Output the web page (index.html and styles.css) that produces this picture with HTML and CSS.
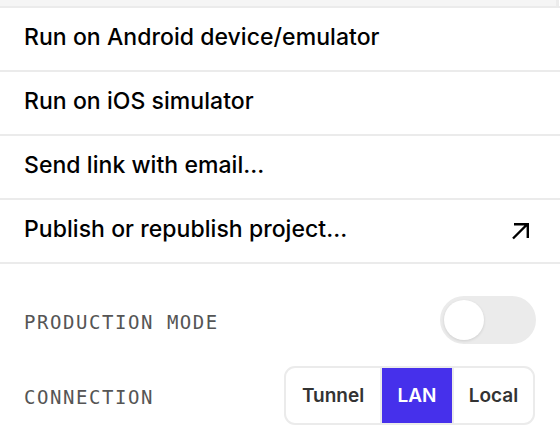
FILE: index.html
```html
<!DOCTYPE html>
<html>
<head>
<meta charset="utf-8">
<link rel="stylesheet" href="styles.css">
</head>
<body>
<div class="top-strip"><div class="top-fill"></div></div>
<div class="menu">
  <div class="menu-item"><span>Run on Android device/emulator</span></div>
  <div class="menu-item"><span>Run on iOS simulator</span></div>
  <div class="menu-item"><span>Send link with email...</span></div>
  <div class="menu-item"><span>Publish or republish project...</span>
    <svg class="arrow" width="18" height="18" viewBox="0 0 18 18"><path d="M2 16.5 L16 2.5 M3 2.2 H16.8 V16" fill="none" stroke="#000" stroke-width="2.4"/></svg>
  </div>
</div>
<div class="settings">
  <div class="setting-row">
    <span class="label">PRODUCTION MODE</span>
    <div class="toggle"><div class="knob"></div></div>
  </div>
  <div class="setting-row">
    <span class="label">CONNECTION</span>
    <div class="segmented">
      <div class="seg seg-tunnel">Tunnel</div>
      <div class="seg active">LAN</div>
      <div class="seg seg-local">Local</div>
    </div>
  </div>
</div>
</body>
</html>
```
FILE: styles.css
```css
html, body {
  margin: 0;
  padding: 0;
  background: #fff;
  font-family: Inter, "Noto Sans", sans-serif;
}
.top-strip {
  height: 6px;
  display: flex;
  border-bottom: 2px solid #ebebeb;
}
.top-fill {
  flex: 1;
  background: #f5f5f5;
  border-right: 3px solid #ececec;
  margin-right: 1px;
}
.menu-item {
  box-sizing: border-box;
  padding: 0 31px 5px 24px;
  border-bottom: 2px solid #ebebeb;
  height: 64px;
  display: flex;
  align-items: center;
  justify-content: space-between;
  font-size: 23px;
  font-weight: 500;
  letter-spacing: 0.05px;
  color: #000;
}
.arrow {
  display: block;
  margin-top: 4px;
}
.settings {
  padding: 32px 24px 0 24px;
  display: flex;
  flex-direction: column;
  gap: 22px;
}
.setting-row {
  display: flex;
  align-items: center;
  justify-content: space-between;
}
.label {
  font-family: "DejaVu Sans Mono", "Liberation Mono", monospace;
  font-size: 19px;
  letter-spacing: 1.55px;
  color: #555;
  padding-top: 3px;
}
.toggle {
  width: 96px;
  height: 48px;
  border-radius: 24px;
  background: #ebebeb;
  display: flex;
  align-items: center;
  padding: 0 4px;
  box-sizing: border-box;
}
.knob {
  width: 40px;
  height: 40px;
  border-radius: 50%;
  background: #fff;
  box-shadow: 0 1px 3px rgba(0,0,0,0.12);
}
.segmented {
  display: flex;
  height: 59px;
  border: 2px solid #ebebeb;
  border-radius: 11px;
  box-sizing: border-box;
  overflow: hidden;
  margin-right: 1px;
}
.seg {
  display: flex;
  align-items: center;
  justify-content: center;
  box-sizing: border-box;
  font-size: 19px;
  font-weight: 600;
  color: #333;
}
.seg-tunnel {
  width: 96px;
  border-right: 2px solid #ebebeb;
}
.seg-local {
  width: 81px;
  border-left: 2px solid #ebebeb;
}
.seg.active {
  width: 70px;
  background: #4630eb;
  color: #fff;
  margin: -2px 0;
}
```
